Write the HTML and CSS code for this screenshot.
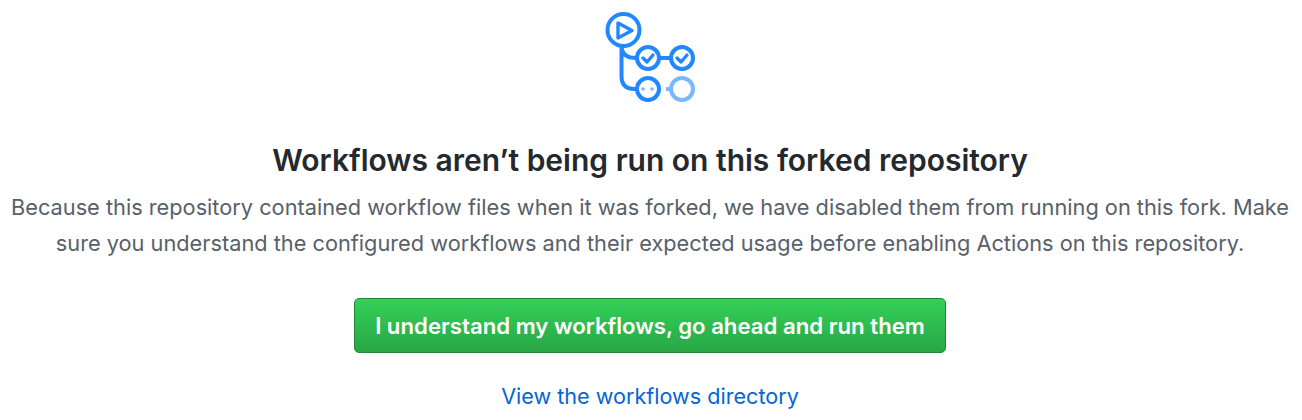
FILE: index.html
```html
<!DOCTYPE html>
<html>
  <head>
    <title>Actions</title>
    <link rel="stylesheet" href="styles.css">
  </head>
  <body>
    <div class="blankslate">
      <svg class="logo" width="96" height="96" viewBox="0 0 96 96" fill="none" stroke="#2188ff" stroke-width="4">
        <circle cx="21.5" cy="20" r="16" />
        <path d="M16 13v15l14-7.5z" stroke-width="3.4" stroke-linejoin="round" />
        <path d="M19.5 36v30q0 13 13 13h2.5M19.5 36q0 12 15 12" />
        <circle cx="46" cy="48" r="11" />
        <circle cx="80" cy="48" r="11" />
        <path d="M57 48h12" />
        <path d="M41 48l4 4 6-7M75 48l4 4 6-7" stroke-width="3.4" stroke-linecap="round" stroke-linejoin="round" />
        <circle cx="46" cy="79" r="11" />
        <circle cx="41" cy="79" r="1.8" fill="#79b8ff" stroke="none" />
        <circle cx="50" cy="79" r="1.8" fill="#79b8ff" stroke="none" />
        <path d="M64 79h4" stroke="#79b8ff" />
        <circle cx="80" cy="79" r="11" stroke="#79b8ff" />
      </svg>
      <h2 class="title">Workflows aren’t being run on this forked repository</h2>
      <p class="desc">Because this repository contained workflow files when it was forked, we have disabled them from running on this fork. Make sure you understand the configured workflows and their expected usage before enabling Actions on this repository.</p>
      <button class="btn-primary">I understand my workflows, go ahead and run them</button>
      <a class="link" href="#">View the workflows directory</a>
    </div>
  </body>
</html>
```

FILE: styles.css
```css
body {
  margin: 0;
  background: #fff;
  font-family: Inter, "Liberation Sans", sans-serif;
  overflow: hidden;
}
.blankslate {
  display: flex;
  flex-direction: column;
  align-items: center;
  text-align: center;
  padding: 10px 2px 0 0;
}
.logo {
  display: block;
}
.title {
  margin: 34px 0 0;
  font-size: 30px;
  line-height: 40px;
  font-weight: 600;
  color: #24292e;
}
.desc {
  margin: 9px 0 0;
  width: 1290px;
  font-size: 21.75px;
  line-height: 36px;
  color: #586069;
}
.btn-primary {
  margin-top: 37px;
  width: 592px;
  height: 55px;
  border: 1px solid #22863a;
  border-radius: 5px;
  background: linear-gradient(#34d058, #28a745);
  color: #fff;
  font-family: inherit;
  font-size: 22.2px;
  font-weight: 600;
}
.link {
  margin-top: 27px;
  font-size: 21.6px;
  line-height: 32px;
  color: #0366d6;
  text-decoration: none;
}
```
